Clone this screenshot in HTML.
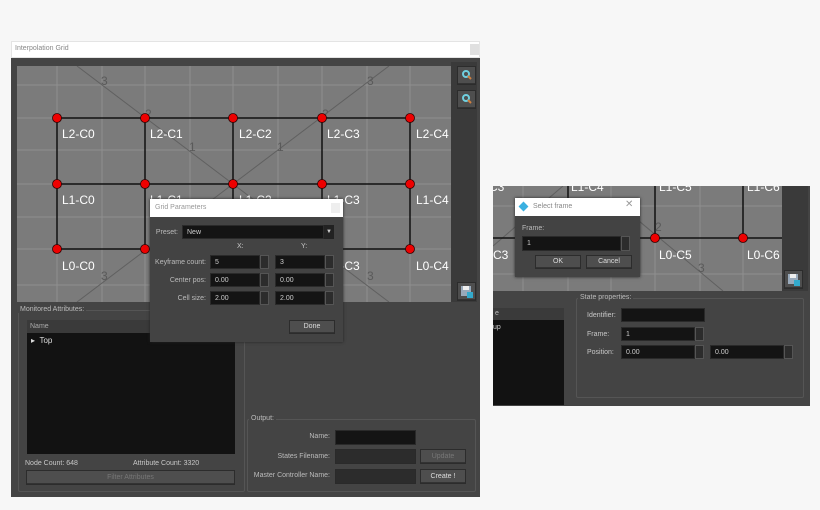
<!DOCTYPE html><html><head><meta charset="utf-8"><style>
*{box-sizing:border-box;margin:0;padding:0}
body{width:820px;height:510px;background:#f7f7f7;position:relative;overflow:hidden;font-family:"Liberation Sans",sans-serif;font-size:7px;color:#c8c8c8}
.a{position:absolute;white-space:nowrap}
.fld{position:absolute;background:#141414;border:1px solid #2a2a2a;color:#ccc;font-size:7px;padding:3px 4px;line-height:7px}
.spin{position:absolute;background:#2c2c2c;border:1px solid #555;width:9px}
.btn{position:absolute;background:#4e4e4e;border:1px solid #2c2c2c;box-shadow:inset 0 -1px 0 #333;color:#ddd;text-align:center;font-size:7px}
.lbl{position:absolute;color:#bbb;font-size:7px;text-align:right;white-space:nowrap}
.grp{position:absolute;border:1px solid #555;border-radius:2px}
</style></head><body>
<!-- LEFT WINDOW -->
<div class="a" style="left:11px;top:41px;width:469px;height:17px;background:#fff;border:1px solid #e4e4e4"></div>
<div class="a" style="left:15px;top:45px;color:#888;font-size:7px">Interpolation Grid</div>
<div class="a" style="left:470px;top:44px;width:9px;height:11px;background:#e0e0e0"></div>
<div class="a" style="left:11px;top:58px;width:469px;height:439px;background:#444"></div>
<div class="a" style="left:451px;top:62px;width:26px;height:240px;background:#3a3a3a"></div>
<div class="btn" style="left:457px;top:66px;width:19px;height:19px"></div>
<div class="btn" style="left:457px;top:90px;width:19px;height:19px"></div>
<svg class="a" style="left:457px;top:66px" width="20" height="45"><g fill="none" stroke-width="2"><circle cx="9" cy="8" r="3" stroke="#6fd0e0"/><line x1="11" y1="10" x2="14" y2="13" stroke="#d08040"/><circle cx="9" cy="32" r="3" stroke="#6fd0e0"/><line x1="11" y1="34" x2="14" y2="37" stroke="#d08040"/></g></svg>
<div class="btn" style="left:457px;top:282px;width:19px;height:19px"></div>
<svg class="a" style="left:461px;top:286px" width="12" height="12"><rect x="0" y="0" width="10" height="10" fill="#9ab"/><rect x="2" y="0" width="6" height="4" fill="#eee"/><rect x="6" y="6" width="6" height="6" fill="#3ac"/></svg>
<svg class="a" style="left:17px;top:66px" width="434" height="236" font-family="Liberation Sans">
<rect width="434" height="236" fill="#7b7b7b"/>
<g stroke="#8f8f8f" stroke-width="1">
<line x1="40" y1="0" x2="40" y2="236"/><line x1="85" y1="0" x2="85" y2="236"/><line x1="128" y1="0" x2="128" y2="236"/><line x1="173" y1="0" x2="173" y2="236"/><line x1="216" y1="0" x2="216" y2="236"/><line x1="261" y1="0" x2="261" y2="236"/><line x1="305" y1="0" x2="305" y2="236"/><line x1="350" y1="0" x2="350" y2="236"/><line x1="393" y1="0" x2="393" y2="236"/>
<line x1="0" y1="19" x2="434" y2="19"/><line x1="0" y1="52" x2="434" y2="52"/><line x1="0" y1="84" x2="434" y2="84"/><line x1="0" y1="118" x2="434" y2="118"/><line x1="0" y1="151" x2="434" y2="151"/><line x1="0" y1="183" x2="434" y2="183"/><line x1="0" y1="219" x2="434" y2="219"/>
</g>
<g stroke="#606060" stroke-width="1"><line x1="60" y1="0" x2="216" y2="118"/><line x1="372" y1="0" x2="216" y2="118"/><line x1="60" y1="236" x2="216" y2="118"/><line x1="372" y1="236" x2="216" y2="118"/></g>
<g fill="#5a5a5a" font-size="12"><text x="84" y="19">3</text><text x="350" y="19">3</text><text x="84" y="214">3</text><text x="350" y="214">3</text><text x="128" y="52">2</text><text x="305" y="52">2</text><text x="172" y="85">1</text><text x="260" y="85">1</text></g>
<g stroke="#111" stroke-width="1.5" fill="none"><rect x="40" y="52" width="353" height="131"/><line x1="40" y1="118" x2="393" y2="118"/><line x1="128" y1="52" x2="128" y2="183"/><line x1="216" y1="52" x2="216" y2="183"/><line x1="305" y1="52" x2="305" y2="183"/></g>
<g fill="#e00" stroke="#300" stroke-width="0.8">
<circle cx="40" cy="52" r="4.5"/><circle cx="128" cy="52" r="4.5"/><circle cx="216" cy="52" r="4.5"/><circle cx="305" cy="52" r="4.5"/><circle cx="393" cy="52" r="4.5"/>
<circle cx="40" cy="118" r="4.5"/><circle cx="128" cy="118" r="4.5"/><circle cx="216" cy="118" r="4.5"/><circle cx="305" cy="118" r="4.5"/><circle cx="393" cy="118" r="4.5"/>
<circle cx="40" cy="183" r="4.5"/><circle cx="128" cy="183" r="4.5"/><circle cx="393" cy="183" r="4.5"/></g>
<g fill="#fff" font-size="12"><text x="45" y="72">L2-C0</text><text x="133" y="72">L2-C1</text><text x="222" y="72">L2-C2</text><text x="310" y="72">L2-C3</text><text x="399" y="72">L2-C4</text>
<text x="45" y="138">L1-C0</text><text x="133" y="138">L1-C1</text><text x="222" y="138">L1-C2</text><text x="310" y="138">L1-C3</text><text x="399" y="138">L1-C4</text>
<text x="45" y="204">L0-C0</text><text x="310" y="204">L0-C3</text><text x="399" y="204">L0-C4</text></g>
</svg>
<!-- monitored attributes -->
<div class="grp" style="left:18px;top:310px;width:227px;height:182px"></div>
<div class="a" style="left:18px;top:306px;background:#444;padding:0 2px;color:#bbb">Monitored Attributes:</div>
<div class="a" style="left:27px;top:320px;width:208px;height:134px;background:#121212"></div>
<div class="a" style="left:27px;top:320px;width:208px;height:13px;background:#3a3a3a;color:#aaa;padding:3px 3px">Name</div>
<div class="a" style="left:31px;top:336px;color:#ddd;font-size:8px">▸&nbsp;&nbsp;Top</div>
<div class="a" style="left:25px;top:460px">Node Count: 648</div>
<div class="a" style="left:133px;top:460px">Attribute Count: 3320</div>
<div class="btn" style="left:26px;top:470px;width:209px;height:15px;line-height:13px;color:#777">Filter Attributes</div>
<!-- output -->
<div class="grp" style="left:247px;top:419px;width:229px;height:73px"></div>
<div class="a" style="left:249px;top:415px;background:#444;padding:0 2px;color:#bbb">Output:</div>
<div class="lbl" style="left:250px;top:433px;width:80px">Name:</div>
<div class="fld" style="left:335px;top:430px;width:81px;height:15px"></div>
<div class="lbl" style="left:250px;top:453px;width:80px">States Filename:</div>
<div class="fld" style="left:335px;top:449px;width:81px;height:15px;background:#2c2c2c"></div>
<div class="btn" style="left:420px;top:449px;width:46px;height:15px;line-height:13px;color:#777">Update</div>
<div class="lbl" style="left:240px;top:472px;width:90px">Master Controller Name:</div>
<div class="fld" style="left:335px;top:469px;width:81px;height:15px;background:#2c2c2c"></div>
<div class="btn" style="left:420px;top:469px;width:46px;height:15px;line-height:13px">Create !</div>
<!-- grid params dialog -->
<div class="a" style="left:150px;top:199px;width:193px;height:143px;background:#434343;box-shadow:0 0 3px #222"></div>
<div class="a" style="left:150px;top:199px;width:193px;height:18px;background:#fff;color:#999;padding:5px 5px">Grid Parameters</div>
<div class="a" style="left:331px;top:203px;width:9px;height:10px;background:#eee"></div>
<div class="lbl" style="left:150px;top:229px;width:28px">Preset:</div>
<div class="fld" style="left:182px;top:225px;width:142px;height:14px">New</div>
<div class="a" style="left:324px;top:225px;width:10px;height:14px;background:#222;color:#ccc;font-size:6px;text-align:center;line-height:14px">▼</div>
<div class="a" style="left:237px;top:243px">X:</div><div class="a" style="left:301px;top:243px">Y:</div>
<div class="lbl" style="left:140px;top:259px;width:66px">Keyframe count:</div>
<div class="lbl" style="left:140px;top:277px;width:66px">Center pos:</div>
<div class="lbl" style="left:140px;top:295px;width:66px">Cell size:</div>
<div class="fld" style="left:210px;top:255px;width:50px;height:14px">5</div><div class="spin" style="left:260px;top:255px;height:14px"></div>
<div class="fld" style="left:275px;top:255px;width:50px;height:14px">3</div><div class="spin" style="left:325px;top:255px;height:14px"></div>
<div class="fld" style="left:210px;top:273px;width:50px;height:14px">0.00</div><div class="spin" style="left:260px;top:273px;height:14px"></div>
<div class="fld" style="left:275px;top:273px;width:50px;height:14px">0.00</div><div class="spin" style="left:325px;top:273px;height:14px"></div>
<div class="fld" style="left:210px;top:291px;width:50px;height:14px">2.00</div><div class="spin" style="left:260px;top:291px;height:14px"></div>
<div class="fld" style="left:275px;top:291px;width:50px;height:14px">2.00</div><div class="spin" style="left:325px;top:291px;height:14px"></div>
<div class="btn" style="left:289px;top:320px;width:46px;height:14px;line-height:12px">Done</div>
<!-- RIGHT WINDOW -->
<div class="a" style="left:493px;top:186px;width:317px;height:220px;background:#444"></div>
<div class="a" style="left:782px;top:186px;width:26px;height:105px;background:#3a3a3a"></div>
<div class="btn" style="left:784px;top:270px;width:19px;height:19px"></div>
<svg class="a" style="left:788px;top:274px" width="12" height="12"><rect x="0" y="0" width="10" height="10" fill="#9ab"/><rect x="2" y="0" width="6" height="4" fill="#eee"/><rect x="6" y="6" width="6" height="6" fill="#3ac"/></svg>
<svg class="a" style="left:493px;top:186px" width="289" height="105" font-family="Liberation Sans">
<rect width="289" height="105" fill="#7b7b7b"/>
<g stroke="#8f8f8f"><line x1="30" y1="0" x2="30" y2="105"/><line x1="75" y1="0" x2="75" y2="105"/><line x1="118" y1="0" x2="118" y2="105"/><line x1="162" y1="0" x2="162" y2="105"/><line x1="207" y1="0" x2="207" y2="105"/><line x1="250" y1="0" x2="250" y2="105"/><line x1="0" y1="20" x2="289" y2="20"/><line x1="0" y1="88" x2="289" y2="88"/></g>
<g stroke="#606060"><line x1="0" y1="60" x2="70" y2="0"/><line x1="140" y1="30" x2="230" y2="105"/></g>
<g stroke="#111" stroke-width="1.5"><line x1="0" y1="52" x2="289" y2="52"/><line x1="75" y1="0" x2="75" y2="52"/><line x1="162" y1="0" x2="162" y2="52"/><line x1="250" y1="0" x2="250" y2="52"/></g>
<g fill="#e00" stroke="#300" stroke-width="0.8"><circle cx="162" cy="52" r="4.5"/><circle cx="250" cy="52" r="4.5"/></g>
<g fill="#fff" font-size="12"><text x="-4" y="5">C3</text><text x="78" y="5">L1-C4</text><text x="166" y="5">L1-C5</text><text x="254" y="5">L1-C6</text><text x="-4" y="73">-C3</text><text x="166" y="73">L0-C5</text><text x="254" y="73">L0-C6</text></g>
<g fill="#5a5a5a" font-size="12"><text x="205" y="86">3</text><text x="162" y="45">2</text></g>
</svg>
<div class="grp" style="left:576px;top:298px;width:228px;height:100px"></div>
<div class="a" style="left:578px;top:294px;background:#444;padding:0 2px;color:#bbb">State properties:</div>
<div class="a" style="left:493px;top:308px;width:71px;height:97px;background:#121212"></div>
<div class="a" style="left:493px;top:308px;width:71px;height:12px;background:#3a3a3a;color:#bbb;padding:2px 2px">e</div>
<div class="a" style="left:493px;top:324px;color:#ccc">up</div>
<div class="a" style="left:564px;top:291px;width:9px;height:115px;background:#444"></div>
<div class="a" style="left:587px;top:312px">Identifier:</div>
<div class="fld" style="left:621px;top:308px;width:84px;height:14px"></div>
<div class="a" style="left:587px;top:331px">Frame:</div>
<div class="fld" style="left:621px;top:327px;width:74px;height:14px">1</div><div class="spin" style="left:695px;top:327px;height:14px"></div>
<div class="a" style="left:587px;top:349px">Position:</div>
<div class="fld" style="left:621px;top:345px;width:74px;height:14px">0.00</div><div class="spin" style="left:695px;top:345px;height:14px"></div>
<div class="fld" style="left:710px;top:345px;width:74px;height:14px">0.00</div><div class="spin" style="left:784px;top:345px;height:14px"></div>
<!-- select frame dialog -->
<div class="a" style="left:515px;top:198px;width:125px;height:79px;background:#434343;box-shadow:0 0 3px #222"></div>
<div class="a" style="left:515px;top:198px;width:125px;height:18px;background:#fff;color:#888;padding:5px 4px 0 18px">Select frame</div>
<div class="a" style="left:520px;top:203px;width:7px;height:7px;background:#3ab0e0;transform:rotate(45deg)"></div>
<div class="a" style="left:625px;top:199px;color:#999;font-size:10px">✕</div>
<div class="a" style="left:522px;top:225px;color:#bbb">Frame:</div>
<div class="fld" style="left:522px;top:236px;width:99px;height:15px">1</div><div class="spin" style="left:621px;top:236px;height:15px"></div>
<div class="btn" style="left:535px;top:255px;width:46px;height:14px;line-height:12px">OK</div>
<div class="btn" style="left:586px;top:255px;width:46px;height:14px;line-height:12px">Cancel</div>
</body></html>
